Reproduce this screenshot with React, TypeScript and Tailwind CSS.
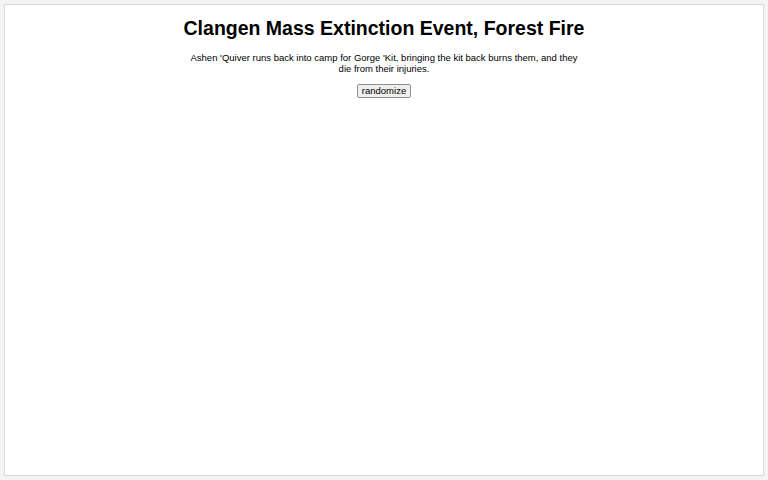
export default function App() {
  return (
    <div className="h-[480px] w-[768px] bg-[#f3f3f3] p-[4px] font-['Liberation_Sans',Arial,sans-serif] text-black">
      <div className="flex h-[472px] flex-col items-center border border-[#dcdcdc] bg-white">
        <h1 className="mt-[11px] text-[19.5px] font-bold leading-[24px]">
          Clangen Mass Extinction Event, Forest Fire
        </h1>
        <p className="mt-[12px] w-[400px] text-center text-[9.5px] leading-[11px]">
          Ashen 'Quiver runs back into camp for Gorge 'Kit, bringing the kit back burns them, and they die from their injuries.
        </p>
        <button className="mt-[10px] rounded-[2px] border border-[#8f8f8f] bg-[#efefef] px-[4px] text-[9.5px] leading-[12px]">
          randomize
        </button>
      </div>
    </div>
  );
}
